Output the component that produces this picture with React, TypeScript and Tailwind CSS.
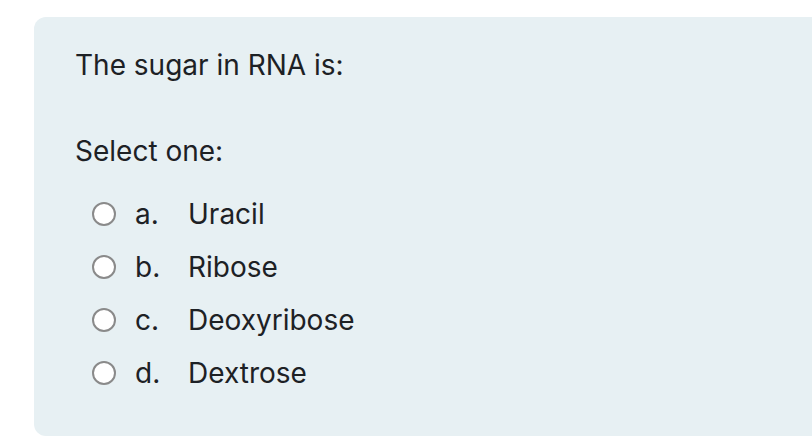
const options = [
  { letter: "a.", label: "Uracil" },
  { letter: "b.", label: "Ribose" },
  { letter: "c.", label: "Deoxyribose" },
  { letter: "d.", label: "Dextrose" },
];

export default function App() {
  return (
    <div className="h-[446px] w-[812px] overflow-hidden bg-white pl-[34px] pt-[17px] font-['Inter',sans-serif] text-[#1d2125]">
      <div className="h-[419px] w-[800px] rounded-l-[12px] bg-[#e7f0f3] pl-[41px] pt-[30px]">
        <p className="text-[28px] leading-[36px]">The sugar in RNA is:</p>
        <p className="mt-[50px] text-[28px] leading-[36px]">Select one:</p>
        <div className="mt-[18px] flex flex-col">
          {options.map((o) => (
            <label key={o.letter} className="flex h-[53px] items-center text-[28px]">
              <span className="ml-[17px] h-[24px] w-[24px] rounded-full border-2 border-[#8a8a8a] bg-white" />
              <span className="ml-[19px] w-[53px]">{o.letter}</span>
              <span>{o.label}</span>
            </label>
          ))}
        </div>
      </div>
    </div>
  );
}
